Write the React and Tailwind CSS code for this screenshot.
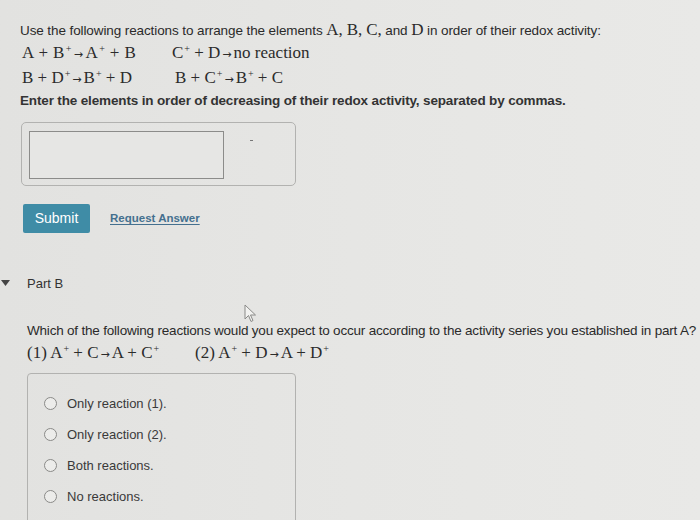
import React from 'react'

const serif = { fontFamily: '"Liberation Serif", "Times New Roman", serif' }

function Eq({ children, className = '' }) {
  return (
    <span className={`text-[17px] text-[#2b2b2b] whitespace-nowrap ${className}`} style={serif}>
      {children}
    </span>
  )
}

function Sup({ children }) {
  return <span className="relative -top-[6px] text-[10px] ml-[1px]">{children}</span>
}

const Arrow = () => (
  <span className="text-[11px] mx-[2px]" style={{ fontFamily: '"DejaVu Sans", sans-serif' }}>
    →
  </span>
)

function Radio({ label }) {
  return (
    <div className="flex items-center gap-[10px] h-[31px]">
      <span className="w-[13px] h-[13px] rounded-full border-[1.5px] border-[#8a8a88] bg-[#ececea]" />
      <span className="text-[13px] text-[#3a3a3a]">{label}</span>
    </div>
  )
}

export default function App() {
  return (
    <div
      className="relative w-[700px] h-[520px] overflow-hidden bg-gradient-to-r from-[#e2e2e0] via-[#e6e6e4] to-[#e9e9e7] text-[#2a2a2a]"
      style={{ fontFamily: '"Liberation Sans", Arial, sans-serif' }}
    >
      <div className="pl-[20px] pt-[20px]">
        <p className="text-[13.5px] leading-[20px] tracking-[-0.1px] whitespace-nowrap">
          Use the following reactions to arrange the elements{' '}
          <Eq className="text-[16px]">A, B, C,</Eq> and <Eq className="text-[16px]">D</Eq> in order of their redox activity:
        </p>

        <div className="flex pl-[2px] h-[24px] items-center">
          <Eq className="w-[150px] tracking-[0.4px]">A + B<Sup>+</Sup><Arrow />A<Sup>+</Sup> + B</Eq>
          <Eq>C<Sup>+</Sup> + D<Arrow />no reaction</Eq>
        </div>
        <div className="flex pl-[2px] h-[26px] items-center">
          <Eq className="w-[153px]">B + D<Sup>+</Sup><Arrow />B<Sup>+</Sup> + D</Eq>
          <Eq>B + C<Sup>+</Sup><Arrow />B<Sup>+</Sup> + C</Eq>
        </div>

        <p className="text-[13.5px] font-bold text-[#333] tracking-[-0.15px] whitespace-nowrap">
          Enter the elements in order of decreasing of their redox activity, separated by commas.
        </p>

        <div className="mt-[11px] ml-[1px] w-[275px] h-[64px] rounded-[5px] border border-[#b2b2b0] flex items-start pt-[8px] pl-[7px]">
          <div className="w-[195px] h-[48px] border-[1.5px] border-[#8c8c8a] bg-[#e6e6e4]" />
          <span className="ml-[26px] mt-[9px] w-[3px] h-[1px] bg-[#777]" />
        </div>

        <div className="mt-[18px] ml-[3px] flex items-center gap-[20px]">
          <button className="w-[67px] h-[29px] rounded-[2px] bg-[#3f8ca6] text-white text-[14px] font-medium">
            Submit
          </button>
          <a className="text-[11.5px] font-bold text-[#44708f] underline underline-offset-2">Request Answer</a>
        </div>
      </div>

      <div className="mt-[40px] flex items-center h-[20px]">
        <div className="w-[27px] flex items-center">
          <svg width="9" height="6" viewBox="0 0 9 6" className="ml-[1px] block">
            <path d="M0 0 L9 0 L4.5 6 Z" fill="#444" />
          </svg>
        </div>
        <span className="text-[13px] font-medium text-[#333]">Part B</span>
      </div>

      <div className="pl-[27px] mt-[28px]">
        <p className="text-[13.5px] leading-[20px] tracking-[-0.2px] whitespace-nowrap">
          Which of the following reactions would you expect to occur according to the activity series you established in part A?
        </p>
        <div className="flex h-[22px] items-center">
          <Eq className="w-[168px]">(1) A<Sup>+</Sup> + C<Arrow />A + C<Sup>+</Sup></Eq>
          <Eq>(2) A<Sup>+</Sup> + D<Arrow />A + D<Sup>+</Sup></Eq>
        </div>

        <div className="mt-[10px] w-[269px] h-[170px] rounded-[4px] border border-[#b2b2b0] pl-[16px] pt-[14px]">
          <Radio label="Only reaction (1)." />
          <Radio label="Only reaction (2)." />
          <Radio label="Both reactions." />
          <Radio label="No reactions." />
        </div>
      </div>

      <svg className="absolute left-[244px] top-[304px]" width="14" height="19" viewBox="0 0 14 19">
        <path d="M1 1 L1 15 L4.5 11.5 L7 17.5 L9 16.5 L6.5 11 L11.5 11 Z" fill="#f2f2f0" stroke="#8a8a88" strokeWidth="1" />
      </svg>
    </div>
  )
}
